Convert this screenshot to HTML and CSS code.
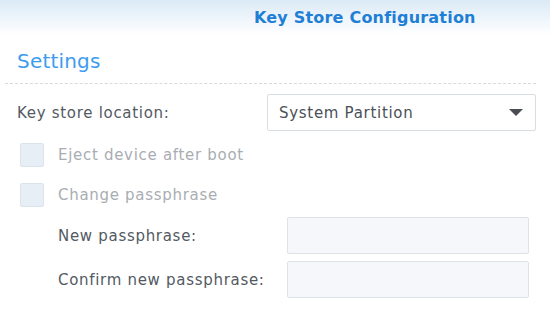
FILE: index.html
```html
<!DOCTYPE html>
<html lang="en">

<head>
    <meta charset="UTF-8">
    <meta name="viewport" content="width=device-width, initial-scale=1.0">
    <title>Key Store Configuration</title>
    <link rel="stylesheet" href="styles.css">
</head>

<body>
    <div class="cabecera">
        <h1 class="titulo">Key Store Configuration</h1>
    </div>

    <main class="panel">
        <h2 class="seccion">Settings</h2>

        <div class="fila fila-select">
            <label class="etiqueta">Key store location:</label>
            <div class="select">
                <span>System Partition</span>
                <span class="flecha"></span>
            </div>
        </div>

        <div class="fila fila-check">
            <span class="check"></span>
            <span class="etiqueta-off">Eject device after boot</span>
        </div>

        <div class="fila fila-check">
            <span class="check"></span>
            <span class="etiqueta-off">Change passphrase</span>
        </div>

        <div class="fila fila-input primera">
            <label class="etiqueta sub">New passphrase:</label>
            <div class="entrada"></div>
        </div>

        <div class="fila fila-input">
            <label class="etiqueta sub">Confirm new passphrase:</label>
            <div class="entrada"></div>
        </div>
    </main>
</body>

</html>
```

FILE: styles.css
```css
body {
    margin: 0;
    font-family: "DejaVu Sans", Verdana, sans-serif;
    font-size: 15px;
    letter-spacing: 0.7px;
    color: #535a62;
    background: #fff;
}

.cabecera {
    height: 35px;
    background: linear-gradient(#dbeaf6, #ffffff);
    padding-left: 254px;
    box-sizing: border-box;
}

.titulo {
    margin: 0;
    padding-top: 8px;
    font-size: 16px;
    font-weight: bold;
    letter-spacing: 0.2px;
    color: #1f7fd6;
    line-height: 20px;
}

.panel {
    padding: 0 14px 0 5px;
}

.seccion {
    margin: 0;
    padding: 14px 0 9px 12px;
    font-size: 20px;
    font-weight: normal;
    letter-spacing: 0.2px;
    color: #3d9cef;
    line-height: 25px;
    border-bottom: 1px dashed #d6dadf;
}

.fila {
    display: flex;
    align-items: center;
}

.fila-select {
    margin-top: 10px;
    padding-left: 12px;
}

.etiqueta {
    width: 250px;
}

.select {
    width: 269px;
    height: 37px;
    box-sizing: border-box;
    border: 1px solid #d9dee4;
    border-radius: 2px;
    display: flex;
    align-items: center;
    justify-content: space-between;
    padding: 0 12px 0 11px;
    color: #4a5058;
}

.flecha {
    width: 0;
    height: 0;
    border-left: 7px solid transparent;
    border-right: 7px solid transparent;
    border-top: 7px solid #4a4d52;
}

.fila-check {
    margin-top: 11px;
    padding-left: 15px;
    height: 25px;
}

.fila-check + .fila-check {
    margin-top: 15px;
}

.check {
    width: 24px;
    height: 24px;
    box-sizing: border-box;
    background: #e8eef5;
    border: 1px solid #dbe3ec;
    border-radius: 2px;
    margin-right: 14px;
}

.etiqueta-off {
    color: #a9adb3;
}

.fila-input {
    margin-top: 7px;
    padding-left: 53px;
}

.fila-input.primera {
    margin-top: 10px;
}

.etiqueta.sub {
    width: 229px;
}

.entrada {
    width: 242px;
    height: 37px;
    box-sizing: border-box;
    background: #f5f7fa;
    border: 1px solid #dde2e8;
    border-radius: 2px;
}
```
